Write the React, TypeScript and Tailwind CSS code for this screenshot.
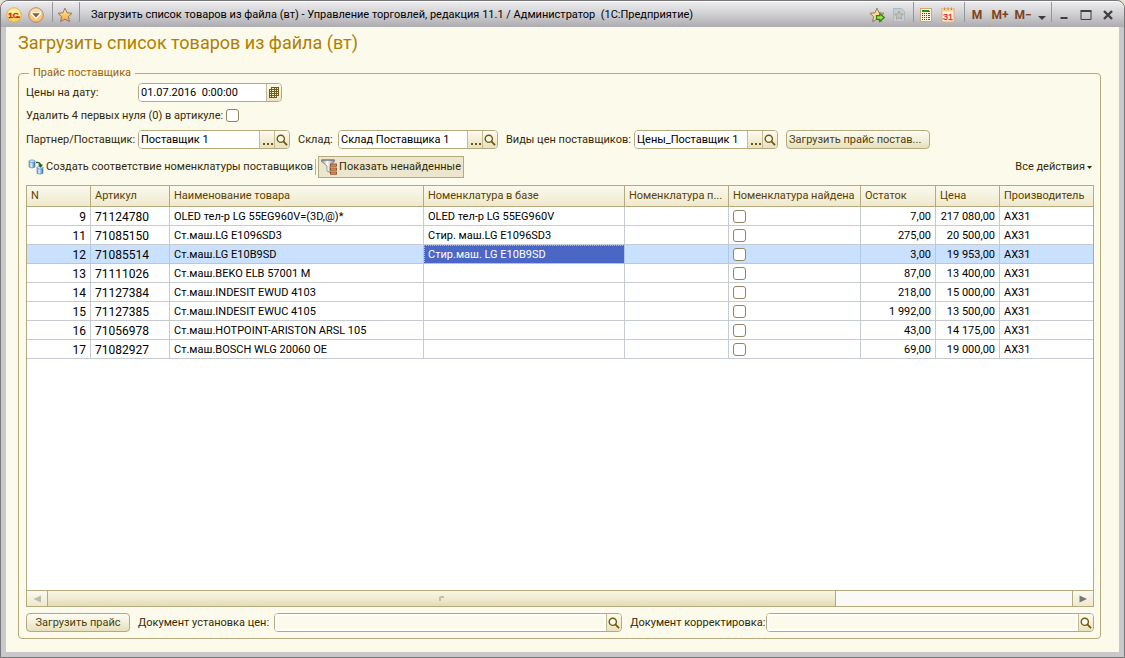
import type { ReactNode } from "react";

type Row = {
  n: number;
  article: string;
  name: string;
  base: string;
  rest: string;
  price: string;
  maker: string;
  selected?: boolean;
};

const rows: Row[] = [
  { n: 9, article: "71124780", name: "OLED тел-р LG 55EG960V=(3D,@)*", base: "OLED тел-р LG 55EG960V", rest: "7,00", price: "217 080,00", maker: "AX31" },
  { n: 11, article: "71085150", name: "Ст.маш.LG E1096SD3", base: "Стир. маш.LG E1096SD3", rest: "275,00", price: "20 500,00", maker: "AX31" },
  { n: 12, article: "71085514", name: "Ст.маш.LG E10B9SD", base: "Стир.маш. LG E10B9SD", rest: "3,00", price: "19 953,00", maker: "AX31", selected: true },
  { n: 13, article: "71111026", name: "Ст.маш.BEKO ELB 57001 M", base: "", rest: "87,00", price: "13 400,00", maker: "AX31" },
  { n: 14, article: "71127384", name: "Ст.маш.INDESIT EWUD 4103", base: "", rest: "218,00", price: "15 000,00", maker: "AX31" },
  { n: 15, article: "71127385", name: "Ст.маш.INDESIT EWUC 4105", base: "", rest: "1 992,00", price: "13 500,00", maker: "AX31" },
  { n: 16, article: "71056978", name: "Ст.маш.HOTPOINT-ARISTON ARSL 105", base: "", rest: "43,00", price: "14 175,00", maker: "AX31" },
  { n: 17, article: "71082927", name: "Ст.маш.BOSCH WLG 20060 OE", base: "", rest: "69,00", price: "19 000,00", maker: "AX31" },
];

const headers = [
  "N",
  "Артикул",
  "Наименование товара",
  "Номенклатура в базе",
  "Номенклатура п...",
  "Номенклатура найдена",
  "Остаток",
  "Цена",
  "Производитель",
];

const STAR = "M8 1.2 L10.1 5.8 L15 6.3 L11.4 9.7 L12.4 14.6 L8 12.1 L3.6 14.6 L4.6 9.7 L1 6.3 L5.9 5.8 Z";

function LogoIcon() {
  return (
    <svg width="16" height="16" viewBox="0 0 16 16" aria-hidden="true">
      <defs>
        <radialGradient id="logoFill" cx="0.5" cy="0.35" r="0.7">
          <stop offset="0" stopColor="#fffbc0" />
          <stop offset="0.6" stopColor="#fdea70" />
          <stop offset="1" stopColor="#f3b248" />
        </radialGradient>
      </defs>
      <circle cx="8" cy="8" r="7.3" fill="url(#logoFill)" stroke="#e0a465" strokeWidth="0.8" />
      <text x="2.2" y="10.8" fontSize="8" fontWeight="700" fontFamily="Liberation Sans, sans-serif" fill="#e01a10" stroke="#e01a10" strokeWidth="0.4">1C</text>
      <path d="M10 10.2 H14" stroke="#e01a10" strokeWidth="1.4" />
    </svg>
  );
}

function MenuIcon() {
  return (
    <svg width="16" height="16" viewBox="0 0 16 16" aria-hidden="true">
      <defs>
        <linearGradient id="menuFill" x1="0" y1="0" x2="0" y2="1">
          <stop offset="0" stopColor="#fde3b4" />
          <stop offset="0.5" stopColor="#fac987" />
          <stop offset="1" stopColor="#f8c071" />
        </linearGradient>
      </defs>
      <circle cx="8" cy="8" r="7.3" fill="url(#menuFill)" stroke="#b08a62" />
      <path d="M2.8 5 H13.2 V7.3 L8 12.5 L2.8 7.3 Z" fill="#fff6e2" />
      <path d="M4.2 6.2 H11.8 L8 10.4 Z" fill="#7c6048" />
    </svg>
  );
}

function StarIcon() {
  return (
    <svg width="16" height="16" viewBox="0 0 16 16" aria-hidden="true">
      <defs>
        <linearGradient id="starFill" x1="0" y1="0" x2="0" y2="1">
          <stop offset="0" stopColor="#fff1c4" />
          <stop offset="0.5" stopColor="#fbc86a" />
          <stop offset="1" stopColor="#f6a440" />
        </linearGradient>
      </defs>
      <path d={STAR} fill="url(#starFill)" stroke="#8f7a5c" strokeLinejoin="round" />
    </svg>
  );
}

function StarArrowIcon() {
  return (
    <svg width="16" height="16" viewBox="0 0 16 16" aria-hidden="true">
      <path d={STAR} fill="#fbd896" stroke="#8f7a5c" strokeLinejoin="round" />
      <path d="M7.5 8.7 H10.8 V6.5 L15.3 10.5 L10.8 14.5 V12.3 H7.5 Z" fill="#9be23c" stroke="#2f7f1b" strokeWidth="1.2" />
    </svg>
  );
}

function PageStarIcon() {
  return (
    <svg width="16" height="16" viewBox="0 0 16 16" aria-hidden="true">
      <path d="M2.5 1.5 H10.5 L13.5 4.5 V14.5 H2.5 Z" fill="#c3ced4" stroke="#a9bac3" />
      <path d="M8 4 L9.3 6.8 L12.3 7.2 L10.1 9.3 L10.6 12.3 L8 10.8 L5.4 12.3 L5.9 9.3 L3.7 7.2 L6.7 6.8 Z" fill="#c9bfb2" stroke="#a39c94" strokeWidth="0.8" />
    </svg>
  );
}

function CalculatorIcon() {
  return (
    <svg width="16" height="16" viewBox="0 0 16 16" shapeRendering="crispEdges" aria-hidden="true">
      <rect x="2" y="1" width="12" height="14" fill="#d3a678" />
      <rect x="3" y="2" width="10" height="12" fill="#fff3dc" />
      <rect x="4" y="3" width="8" height="2" fill="#2d8a1d" />
      <rect x="11" y="3" width="1" height="1" fill="#c4e6a8" />
      <g fill="#4d4540">
        {[6, 8, 10, 12].map((y) =>
          [4, 6, 8].map((x) => <rect key={`${x}-${y}`} x={x} y={y} width="1" height="1" />),
        )}
      </g>
      <g fill="#9a3a1a">
        {[6, 8, 10, 12].map((y) => (
          <rect key={y} x="10" y={y} width="2" height="1" />
        ))}
      </g>
    </svg>
  );
}

function CalendarIcon() {
  return (
    <svg width="16" height="16" viewBox="0 0 16 16" aria-hidden="true">
      <rect x="2" y="1.5" width="12" height="13.5" fill="#fff1dc" stroke="#d8ab7d" />
      <rect x="2" y="1.5" width="12" height="3" fill="#f8cd92" />
      <path d="M4.5 0.5 V3 M8 0.5 V3 M11.5 0.5 V3" stroke="#c08a56" />
      <text x="8" y="12.8" textAnchor="middle" fontSize="9" fontFamily="Liberation Sans, sans-serif" fill="#f02a18" stroke="#f02a18" strokeWidth="0.3">31</text>
    </svg>
  );
}

function SheetIcon() {
  return (
    <svg width="12" height="12" viewBox="0 0 12 12" shapeRendering="crispEdges" aria-hidden="true">
      <path d="M3 0 H11 V9 H9 V11 H1 V2 H3 Z" fill="#6b5b1c" />
      <g fill="#f3edd0">
        {[3, 5, 7, 9].map((y) => (
          <g key={y}>
            <rect x="2" y={y} width="1" height="1" />
            <rect x="4" y={y} width="2" height="1" />
            <rect x="7" y={y} width="1" height="1" />
          </g>
        ))}
        {[1, 3, 5, 7].map((y) => (
          <rect key={y} x="9" y={y} width="1" height="1" />
        ))}
        <rect x="4" y="1" width="2" height="1" />
        <rect x="7" y="1" width="1" height="1" />
      </g>
    </svg>
  );
}

function SearchIcon() {
  return (
    <svg width="12" height="12" viewBox="0 0 12 12" aria-hidden="true">
      <circle cx="4.8" cy="4.8" r="3.6" fill="#fdfbf0" stroke="#6f590f" strokeWidth="1.4" />
      <path d="M7.6 7.6 L10.4 10.4" stroke="#6f590f" strokeWidth="1.8" strokeLinecap="square" />
    </svg>
  );
}

function LinkIcon() {
  return (
    <svg width="16" height="16" viewBox="0 0 16 16" aria-hidden="true">
      <defs>
        <linearGradient id="cyl" x1="0" y1="0" x2="1" y2="0">
          <stop offset="0" stopColor="#5c9ccf" />
          <stop offset="0.35" stopColor="#e4f4ff" />
          <stop offset="1" stopColor="#2f74ad" />
        </linearGradient>
      </defs>
      <path d="M1 2 V8 Q4 10 7 8 V2 Z" fill="url(#cyl)" stroke="#427eae" strokeWidth="0.6" />
      <ellipse cx="4" cy="2.2" rx="3" ry="1.3" fill="#c8e5f8" stroke="#427eae" strokeWidth="0.6" />
      <path d="M9 8.5 V14.3 Q12 16 15 14.3 V8.5 Z" fill="url(#cyl)" stroke="#427eae" strokeWidth="0.6" />
      <ellipse cx="12" cy="8.7" rx="3" ry="1.3" fill="#c8e5f8" stroke="#427eae" strokeWidth="0.6" />
      <path d="M8 3.5 Q12 3 12.5 6" fill="none" stroke="#29571f" strokeWidth="1.3" />
      <path d="M10 5.5 H15 L12.6 8.8 Z" fill="#29571f" />
    </svg>
  );
}

function FilterIcon() {
  return (
    <svg width="16" height="16" viewBox="0 0 16 16" aria-hidden="true">
      <defs>
        <linearGradient id="funnel" x1="0" y1="0" x2="1" y2="0">
          <stop offset="0" stopColor="#8e8e92" />
          <stop offset="0.45" stopColor="#ffffff" />
          <stop offset="1" stopColor="#85858a" />
        </linearGradient>
      </defs>
      <path d="M0.5 1 H13.5 V2.5 L9 7 V13.5 L6 12 V7 L0.5 2.5 Z" fill="url(#funnel)" stroke="#85858a" strokeWidth="0.8" />
      <path d="M0.5 1 H13.5" stroke="#77777c" strokeWidth="1.2" />
      <g fill="#e79a5c" stroke="#8a4a22" strokeWidth="0.9">
        <rect x="9.5" y="5" width="6" height="2.2" />
        <rect x="9.5" y="9" width="6" height="2.2" />
        <rect x="9.5" y="13" width="6" height="2.2" />
      </g>
    </svg>
  );
}

function Separator() {
  return <div className="mx-px h-5 w-px shrink-0 self-start bg-[#96969a]" />;
}

function BarButton({ label, children }: { label: string; children: ReactNode }) {
  return (
    <button type="button" aria-label={label} className="flex h-full w-[22px] shrink-0 items-center justify-center">
      {children}
    </button>
  );
}

function FieldButton({ label, children }: { label: string; children: ReactNode }) {
  return (
    <button
      type="button"
      aria-label={label}
      className="flex w-[15px] shrink-0 items-center justify-center border-l border-[#c5ba93] bg-linear-to-b from-[#fdfbee] to-[#e9e2c0]"
    >
      {children}
    </button>
  );
}

function Dots() {
  return (
    <svg width="11" height="12" viewBox="0 0 11 12" shapeRendering="crispEdges" aria-hidden="true">
      <path d="M1 9 H3 V11 H1 Z M5 9 H7 V11 H5 Z M9 9 H11 V11 H9 Z" fill="#6b5714" />
    </svg>
  );
}

function Field({
  id,
  value,
  className,
  inputClass,
  children,
}: {
  id: string;
  value: string;
  className: string;
  inputClass: string;
  children: ReactNode;
}) {
  return (
    <div className={`flex h-[19px] min-w-0 overflow-hidden rounded border border-[#b5a97e] ${className}`}>
      <input id={id} defaultValue={value} className={`w-0 min-w-0 flex-1 px-0.5 text-black outline-none ${inputClass}`} />
      {children}
    </div>
  );
}

const checkboxClass = "block size-[13px] appearance-none rounded-[3px] border border-[#8f8661] bg-white";
const pushClass =
  "h-[19px] shrink-0 whitespace-nowrap rounded border border-[#b5a97e] bg-linear-to-b from-[#fefdf4] to-[#e7e0bd] text-[#4d3f0c]";

export default function App() {
  return (
    <div className="flex min-h-screen flex-col bg-[#e6e3d2] font-['Roboto','Liberation_Sans',sans-serif] text-[11px] leading-4 text-[#352a06]">
      <div className="flex flex-1 flex-col rounded-t-lg border border-[#77777a] bg-[#c9c9cc]">
        <header className="flex h-[26px] items-center rounded-t-lg border-t border-white bg-linear-to-b from-[#ececee] via-[#cfcfd2] to-[#acacb0] pr-[5px] pl-[2px] text-black">
          <BarButton label="1С:Предприятие"><LogoIcon /></BarButton>
          <BarButton label="Главное меню"><MenuIcon /></BarButton>
          <div className="w-1" />
          <Separator />
          <BarButton label="Избранное"><StarIcon /></BarButton>
          <div className="w-0.5" />
          <Separator />
          <h1 className="min-w-0 flex-1 truncate pl-2.5 whitespace-pre">
            Загрузить список товаров из файла (вт) - Управление торговлей, редакция 11.1 / Администратор  (1С:Предприятие)
          </h1>
          <BarButton label="Добавить в избранное"><StarArrowIcon /></BarButton>
          <BarButton label="Страница в избранном"><PageStarIcon /></BarButton>
          <div className="w-0.5" />
          <Separator />
          <BarButton label="Калькулятор"><CalculatorIcon /></BarButton>
          <BarButton label="Календарь"><CalendarIcon /></BarButton>
          <div className="w-1" />
          <Separator />
          <div className="flex text-[12px] font-bold text-[#7c431f]">
            <button type="button" className="w-[22px]">M</button>
            <button type="button" className="w-6">M+</button>
            <button type="button" className="w-[22px]">M−</button>
          </div>
          <button type="button" aria-label="Ещё" className="flex w-4 justify-center pt-1.5">
            <svg width="8" height="4" viewBox="0 0 8 4" aria-hidden="true">
              <path d="M0 0 H8 L4 4 Z" fill="#3c3c3e" />
            </svg>
          </button>
          <Separator />
          <BarButton label="Свернуть">
            <svg width="12" height="12" viewBox="0 0 12 12" aria-hidden="true"><path d="M2.5 9 H9.5" stroke="#3f3f42" strokeWidth="2" /></svg>
          </BarButton>
          <BarButton label="Развернуть">
            <svg width="12" height="12" viewBox="0 0 12 12" aria-hidden="true">
              <path d="M1 2.5 V10.5 H11 V2" fill="none" stroke="#3f3f42" />
              <path d="M0.5 2 H11.5" stroke="#3f3f42" strokeWidth="2" />
            </svg>
          </BarButton>
          <BarButton label="Закрыть">
            <svg width="12" height="12" viewBox="0 0 12 12" aria-hidden="true"><path d="M2 2 L10 10 M10 2 L2 10" stroke="#3f3f42" strokeWidth="2.4" /></svg>
          </BarButton>
        </header>

        <main className="mx-[5px] mb-[5px] flex flex-1 flex-col bg-[#fcfaeb] pr-[18px] pb-[13px] pl-3">
          <h2 className="mt-1 text-[18px] leading-6 text-[#b07f00]">Загрузить список товаров из файла (вт)</h2>

          <section className="mt-[18px] flex min-w-0 flex-1 flex-col rounded border border-[#b5a97e] pr-1.5 pb-1.5 pl-[7px]">
            <h3 className="-mt-[9px] ml-[3px] self-start bg-[#fcfaeb] px-1 text-[#9c6500]">Прайс поставщика</h3>

            <div className="mt-0.5 flex items-center">
              <label htmlFor="date" className="w-[112px]">Цены на дату:</label>
              <Field id="date" value="01.07.2016  0:00:00" className="w-36" inputClass="bg-white">
                <FieldButton label="Выбрать дату"><SheetIcon /></FieldButton>
              </Field>
            </div>

            <div className="mt-1.5 flex h-[15px] items-center">
              <label htmlFor="zeros" className="w-[200px]">Удалить 4 первых нуля (0) в артикуле:</label>
              <input id="zeros" type="checkbox" className={checkboxClass} />
            </div>

            <div className="mt-[7px] flex items-center whitespace-nowrap">
              <label htmlFor="partner" className="w-[112px]">Партнер/Поставщик:</label>
              <Field id="partner" value="Поставщик 1" className="w-[152px]" inputClass="bg-white">
                <FieldButton label="Выбрать партнера"><Dots /></FieldButton>
                <FieldButton label="Открыть партнера"><SearchIcon /></FieldButton>
              </Field>
              <label htmlFor="store" className="ml-2 w-10">Склад:</label>
              <Field id="store" value="Склад Поставщика 1" className="w-40" inputClass="bg-white">
                <FieldButton label="Выбрать склад"><Dots /></FieldButton>
                <FieldButton label="Открыть склад"><SearchIcon /></FieldButton>
              </Field>
              <label htmlFor="kinds" className="ml-2 w-32">Виды цен поставщиков:</label>
              <Field id="kinds" value="Цены_Поставщик 1" className="w-36" inputClass="bg-white">
                <FieldButton label="Выбрать вид цен"><Dots /></FieldButton>
                <FieldButton label="Открыть вид цен"><SearchIcon /></FieldButton>
              </Field>
              <button type="button" className={`ml-2 w-36 px-0.5 text-left ${pushClass}`}>Загрузить прайс постав...</button>
            </div>

            <div className="mt-[7px] flex h-[22px] items-center">
              <button type="button" className="flex items-center gap-0.5 pl-0.5">
                <LinkIcon />
                Создать соответствие номенклатуры поставщиков
              </button>
              <div className="mx-0.5 h-4 w-px bg-[#b5b0a0]" />
              <button type="button" className="flex h-[22px] items-center gap-0.5 border border-[#b5a97e] bg-[#ebe6cd] px-0.5">
                <FilterIcon />
                Показать ненайденные
              </button>
              <button type="button" className="ml-auto flex items-center gap-0.5 pr-0.5">
                Все действия
                <svg width="5" height="3" viewBox="0 0 5 3" aria-hidden="true"><path d="M0 0 H5 L2.5 3 Z" fill="#352a06" /></svg>
              </button>
            </div>

            <div className="mt-[7px] flex min-h-0 flex-1 flex-col border border-[#b5a97e] bg-white">
              <div className="flex-1 overflow-hidden">
                <table className="w-full table-fixed border-separate border-spacing-0">
                  <colgroup>
                    <col className="w-16" />
                    <col className="w-[79px]" />
                    <col className="w-[254px]" />
                    <col className="w-[201px]" />
                    <col className="w-[104px]" />
                    <col className="w-[132px]" />
                    <col className="w-[75px]" />
                    <col className="w-16" />
                    <col />
                  </colgroup>
                  <thead>
                    <tr className="h-[21px]">
                      {headers.map((h) => (
                        <th key={h} className="truncate border-r border-b border-[#b5a97e] bg-linear-to-b from-[#fbf9ee] to-[#efe9cd] p-0 pl-1 text-left font-normal text-[#5a4300] last:border-r-0">
                          {h}
                        </th>
                      ))}
                    </tr>
                  </thead>
                  <tbody>
                    {rows.map((r) => (
                      <tr
                        key={r.n}
                        className={`h-[19px] text-black *:truncate *:border-r *:border-b *:p-0 *:px-1 *:pt-px *:last:border-r-0 ${r.selected ? "bg-[#c9e1ff] *:border-[#b2c9e4]" : "*:border-[#c6cbd2]"}`}
                      >
                        <td className="text-right text-[12px]">{r.n}</td>
                        <td className="text-[12px]">{r.article}</td>
                        <td>{r.name}</td>
                        <td className={r.selected ? "bg-[#4a67c5] text-white outline outline-offset-[-1px] outline-dotted outline-[#c9c28a]" : ""}>{r.base}</td>
                        <td />
                        <td>
                          <input type="checkbox" aria-label={`Номенклатура найдена, строка ${r.n}`} className={checkboxClass} />
                        </td>
                        <td className="text-right">{r.rest}</td>
                        <td className="text-right">{r.price}</td>
                        <td>{r.maker}</td>
                      </tr>
                    ))}
                  </tbody>
                </table>
              </div>

              <div className="flex h-4 border-t border-[#b5a97e] bg-[#faf9f3]">
                <button type="button" aria-label="Прокрутить влево" className="flex w-[21px] items-center justify-center border-r border-[#b5a97e] bg-linear-to-b from-[#fbf9ee] to-[#efe9cd]">
                  <svg width="8" height="8" viewBox="0 0 8 8" aria-hidden="true"><path d="M8 0.5 V7.5 L0.5 4 Z" fill="#bdbbb0" /></svg>
                </button>
                <div className="flex flex-1">
                  <div className="flex w-[77%] items-center justify-center border-r border-[#b5a97e] bg-linear-to-b from-[#f8f5e4] via-[#f1ebcf] to-[#e2dbb6]">
                    <svg width="6" height="6" viewBox="0 0 6 6" aria-hidden="true"><path d="M1 5 V2 Q1 1 2 1 H5" fill="none" stroke="#c4bfa6" strokeWidth="2" /></svg>
                  </div>
                </div>
                <button type="button" aria-label="Прокрутить вправо" className="flex w-[21px] items-center justify-center border-l border-[#b5a97e] bg-linear-to-b from-[#fbf9ee] to-[#efe9cd]">
                  <svg width="8" height="8" viewBox="0 0 8 8" aria-hidden="true"><path d="M0.5 0.5 V7.5 L8 4 Z" fill="#77767a" /></svg>
                </button>
              </div>
            </div>

            <div className="mt-1.5 flex items-center whitespace-nowrap">
              <button type="button" className={`w-[104px] text-center ${pushClass}`}>Загрузить прайс</button>
              <label htmlFor="pricesDoc" className="w-36 pl-2">Документ установка цен:</label>
              <Field id="pricesDoc" value="" className="flex-[17]" inputClass="border-2 border-white bg-[#fcfaeb]">
                <FieldButton label="Открыть документ установки цен"><SearchIcon /></FieldButton>
              </Field>
              <label htmlFor="fixDoc" className="w-36 pl-2">Документ корректировка:</label>
              <Field id="fixDoc" value="" className="flex-[16]" inputClass="border-2 border-white bg-[#fcfaeb]">
                <FieldButton label="Открыть документ корректировки"><SearchIcon /></FieldButton>
              </Field>
            </div>
          </section>
        </main>
      </div>
    </div>
  );
}
